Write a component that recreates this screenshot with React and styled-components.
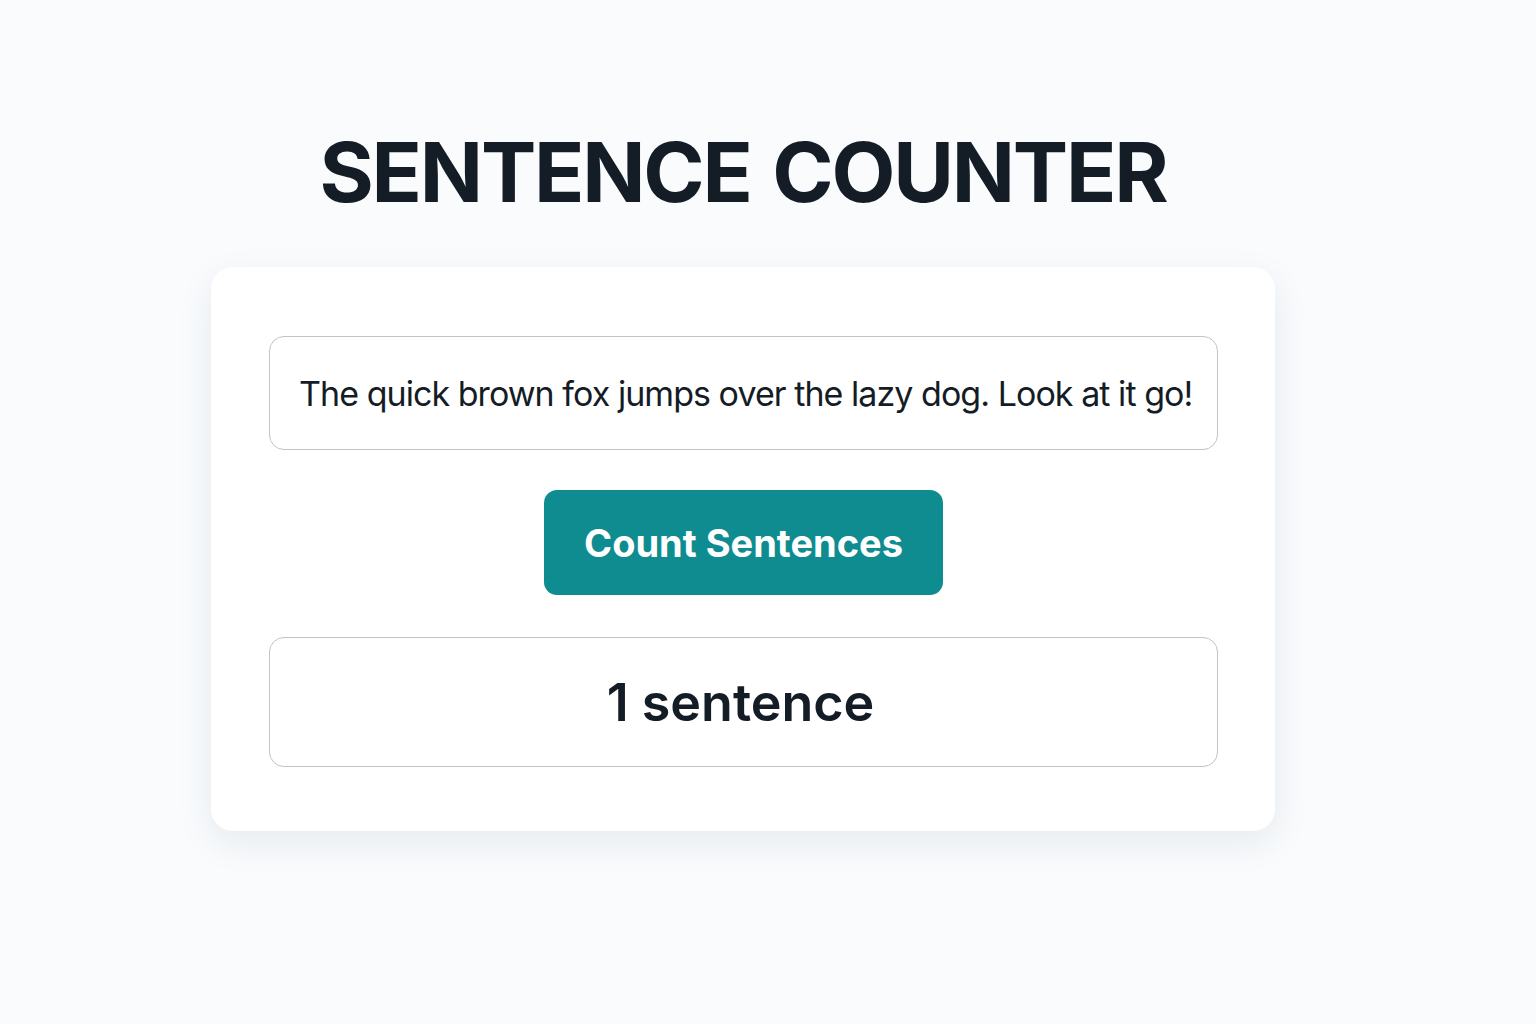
import React, { useState } from 'react';
import styled, { createGlobalStyle } from 'styled-components';

const GlobalStyle = createGlobalStyle`
  body {
    margin: 0;
    background: #f9fbfd;
    font-family: Inter, "Noto Sans", sans-serif;
    color: #141c26;
  }
`;

const Page = styled.main`
  min-height: 1024px;
  display: flex;
  flex-direction: column;
  align-items: center;
  padding: 125px 50px 0 0;
  box-sizing: border-box;
`;

const Title = styled.h1`
  margin: 0 0 47px;
  font-size: 83px;
  font-weight: 700;
  line-height: 1.15;
  letter-spacing: -2.2px;
  word-spacing: 4px;
  color: #141c26;
`;

const Card = styled.section`
  width: 1064px;
  box-sizing: border-box;
  padding: 69px 57px 64px 58px;
  background: #ffffff;
  border-radius: 22px;
  box-shadow: 0 12px 36px rgba(30, 45, 70, 0.08);
  display: flex;
  flex-direction: column;
  align-items: center;
  gap: 40px;
`;

const TextInput = styled.input`
  width: 100%;
  height: 114px;
  box-sizing: border-box;
  padding: 0 10px 0 29px;
  border: 1.5px solid #bfc3cc;
  border-radius: 15px;
  font-family: Inter, "Noto Sans", sans-serif;
  font-size: 34px;
  letter-spacing: -0.95px;
  color: #141c26;
  outline: none;
`;

const Button = styled.button`
  width: 399px;
  height: 105px;
  border: none;
  border-radius: 13px;
  background: #0f8c8f;
  color: #ffffff;
  font-family: Inter, "Noto Sans", sans-serif;
  font-size: 38px;
  font-weight: 700;
  cursor: pointer;
`;

const Result = styled.div`
  width: 100%;
  height: 130px;
  margin-top: 2px;
  box-sizing: border-box;
  border: 1.5px solid #bfc3cc;
  border-radius: 15px;
  display: flex;
  align-items: center;
  justify-content: center;
  padding-right: 6px;
  font-size: 52px;
  font-weight: 600;
  color: #141c26;
`;

function countSentences(text) {
  const m = text.match(/[^.!?]+[.!?]+/g);
  return m ? m.length : 0;
}

export default function App() {
  const [text, setText] = useState('The quick brown fox jumps over the lazy dog. Look at it go!');
  const [count, setCount] = useState(1);

  return (
    <>
      <GlobalStyle />
      <Page>
        <Title>SENTENCE COUNTER</Title>
        <Card>
          <TextInput value={text} onChange={(e) => setText(e.target.value)} />
          <Button onClick={() => setCount(countSentences(text))}>Count Sentences</Button>
          <Result>
            {count} {count === 1 ? 'sentence' : 'sentences'}
          </Result>
        </Card>
      </Page>
    </>
  );
}
